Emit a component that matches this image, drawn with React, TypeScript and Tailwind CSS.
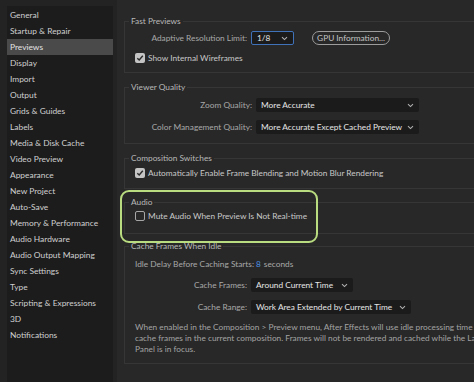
import React, { useState } from 'react';

const navItems = [
    'General',
    'Startup & Repair',
    'Previews',
    'Display',
    'Import',
    'Output',
    'Grids & Guides',
    'Labels',
    'Media & Disk Cache',
    'Video Preview',
    'Appearance',
    'New Project',
    'Auto-Save',
    'Memory & Performance',
    'Audio Hardware',
    'Audio Output Mapping',
    'Sync Settings',
    'Type',
    'Scripting & Expressions',
    '3D',
    'Notifications',
];

const Chevron = () => (
    <svg width="7" height="5" viewBox="0 0 7 5" className="shrink-0">
        <path d="M1 1.2 L3.5 3.6 L6 1.2" fill="none" stroke="#b0b0b0" strokeWidth="1.1" />
    </svg>
);

const Select = ({ value, width, focused }: { value: string; width: string; focused?: boolean }) => (
    <div
        className={`${width} h-[14px] flex items-center justify-between pl-[5px] pr-[5px] bg-[#1b1b1b] rounded-[2px] text-[#e6e6e6] ${
            focused ? 'border border-[#3f72b8]' : ''
        }`}
    >
        <span className="whitespace-nowrap">{value}</span>
        <Chevron />
    </div>
);

const Checkbox = ({ checked, label }: { checked: boolean; label: string }) => (
    <div className="flex items-center h-[14px] gap-[3px]">
        {checked ? (
            <div className="w-[10px] h-[10px] rounded-[2px] bg-[#c4c4c4] flex items-center justify-center">
                <svg width="8" height="8" viewBox="0 0 8 8">
                    <path d="M1.3 4.2 L3.2 6 L6.8 1.8" fill="none" stroke="#2a2a2a" strokeWidth="1.4" />
                </svg>
            </div>
        ) : (
            <div className="w-[10px] h-[10px] rounded-[2px] border border-[#a6a6a6]"></div>
        )}
        <span className="text-[#c8c8c8] whitespace-nowrap">{label}</span>
    </div>
);

const Section = ({ title, className, children }: { title: string; className?: string; children: React.ReactNode }) => (
    <fieldset className={`w-[420px] border border-[#363636] ${className ?? ''}`}>
        <legend className="ml-[4px] px-[2px] leading-[12px] text-[#b8b8b8] whitespace-nowrap">{title}</legend>
        {children}
    </fieldset>
);

const App = () => {
    const [active, setActive] = useState('Previews');

    return (
        <div className="w-[474px] h-[382px] bg-[#232323] flex overflow-hidden text-[8.3px] font-['Lato','Liberation_Sans',sans-serif]">
            {/* Liste des catégories */}
            <nav className="ml-[7px] mt-[6px] w-[106px] shrink-0 bg-[#1c1c1c] pt-[1px] flex flex-col">
                {navItems.map(item => (
                    <button
                        key={item}
                        onClick={() => setActive(item)}
                        className={`h-[16px] flex items-center pl-[3px] text-left text-[8.4px] whitespace-nowrap ${
                            active === item ? 'bg-[#4a4a4a] text-[#e2e2e2]' : 'text-[#d0d0d0]'
                        }`}
                    >
                        {item}
                    </button>
                ))}
            </nav>

            {/* Panneau Previews */}
            <main className="relative flex-1 min-w-0 ml-[4px] bg-[#282828] pl-[7px] pt-[15px]">
                <Section title="Fast Previews" className="pb-[7px]">
                    <div className="mt-[4px] flex items-center h-[14px]">
                        <span className="w-[126px] text-right text-[#a9a9a9] pr-[4px] whitespace-nowrap">Adaptive Resolution Limit:</span>
                        <Select value="1/8" width="w-[43px]" focused />
                        <button className="ml-[18px] h-[14px] w-[78px] rounded-full border-[1.5px] border-[#9c9c9c] text-[#c4c4c4] leading-none whitespace-nowrap">
                            GPU Information...
                        </button>
                    </div>
                    <div className="mt-[6px] pl-[10px]">
                        <Checkbox checked label="Show Internal Wireframes" />
                    </div>
                </Section>

                <Section title="Viewer Quality" className="mt-[8px] pb-[9px]">
                    <div className="mt-[5px] flex items-center">
                        <span className="w-[131px] text-right text-[#a9a9a9] pr-[4px] whitespace-nowrap">Zoom Quality:</span>
                        <Select value="More Accurate" width="w-[163px]" />
                    </div>
                    <div className="mt-[8px] flex items-center">
                        <span className="w-[131px] text-right text-[#a9a9a9] pr-[4px] whitespace-nowrap">Color Management Quality:</span>
                        <Select value="More Accurate Except Cached Preview" width="w-[163px]" />
                    </div>
                </Section>

                <Section title="Composition Switches" className="mt-[8px] pb-[8px]">
                    <div className="mt-[2px] pl-[10px]">
                        <Checkbox checked label="Automatically Enable Frame Blending and Motion Blur Rendering" />
                    </div>
                </Section>

                <Section title="Audio" className="mt-[7px] pb-[10px]">
                    <div className="mt-[1px] pl-[10px]">
                        <Checkbox checked={false} label="Mute Audio When Preview Is Not Real-time" />
                    </div>
                </Section>

                <Section title="Cache Frames When Idle" className="mt-[6px] pb-[8px]">
                    <div className="mt-[5px] h-[14px] flex items-center pl-[10px] text-[#a9a9a9] whitespace-nowrap">
                        <span className="w-[121px] shrink-0">Idle Delay Before Caching Starts:</span>
                        <span className="text-[#4b8fe0]">8</span>
                        <span className="ml-[3px]">seconds</span>
                    </div>
                    <div className="mt-[7px] flex items-center">
                        <span className="w-[126px] text-right text-[#a9a9a9] pr-[4px] whitespace-nowrap">Cache Frames:</span>
                        <Select value="Around Current Time" width="w-[102px]" />
                    </div>
                    <div className="mt-[8px] flex items-center">
                        <span className="w-[126px] text-right text-[#a9a9a9] pr-[4px] whitespace-nowrap">Cache Range:</span>
                        <Select value="Work Area Extended by Current Time" width="w-[160px]" />
                    </div>
                    <p className="mt-[8px] pl-[10px] leading-[11px] text-[#a3a3a3] whitespace-nowrap">
                        When enabled in the Composition &gt; Preview menu, After Effects will use idle processing time to
                        <br />
                        cache frames in the current composition. Frames will not be rendered and cached while the Layer
                        <br />
                        Panel is in focus.
                    </p>
                </Section>

                {/* Encadré vert autour de la section Audio */}
                <div className="absolute left-[3px] top-[190px] w-[198px] h-[53px] rounded-[9px] border-2 border-[#b9dc80] pointer-events-none"></div>
            </main>
        </div>
    );
};

export default App;
